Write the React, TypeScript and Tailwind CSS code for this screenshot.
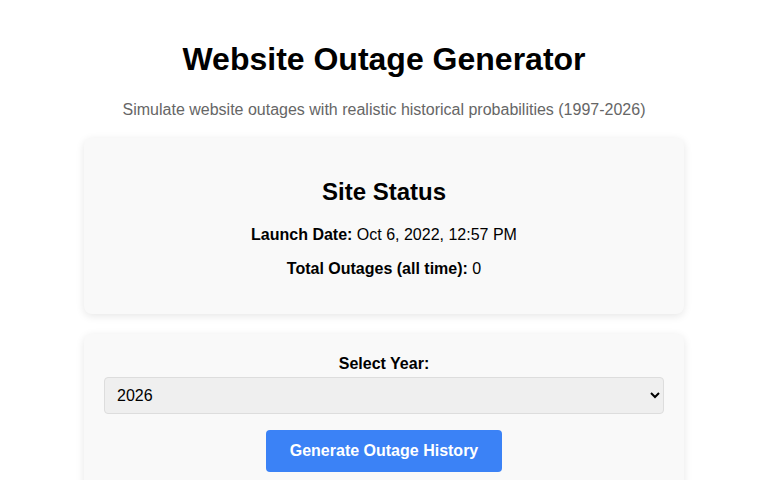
import { useState } from "react";

const App = () => {
  const [year, setYear] = useState("2026")
  const years = Array.from({ length: 30 }, (_, i) => String(2026 - i))

  return (
    <div className="min-h-screen bg-white p-5 font-['Liberation_Sans',Arial,sans-serif] text-black">
      <div className="mx-auto max-w-[600px] text-center">
        <h1 className="mt-[21px] text-[32px] font-bold leading-[37px]">Website Outage Generator</h1>
        <p className="mt-[23px] text-base leading-[18px] text-[#666]">
          Simulate website outages with realistic historical probabilities (1997-2026)
        </p>

        {/* Status card */}
        <div className="mt-[19px] rounded-lg bg-[#f9f9f9] p-5 shadow-[0_2px_8px_rgba(0,0,0,0.1)]">
          <h2 className="mt-5 text-2xl font-bold leading-[28px]">Site Status</h2>
          <p className="mt-5 text-base leading-[18px]">
            <strong>Launch Date:</strong> Oct 6, 2022, 12:57 PM
          </p>
          <p className="mt-4 mb-4 text-base leading-[18px]">
            <strong>Total Outages (all time):</strong> 0
          </p>
        </div>

        {/* Generator card */}
        <div className="mt-5 rounded-lg bg-[#f9f9f9] p-5 shadow-[0_2px_8px_rgba(0,0,0,0.1)]">
          <label htmlFor="year" className="block pt-px text-base font-bold leading-[18px]">
            Select Year:
          </label>
          <select
            id="year"
            value={year}
            onChange={(e) => setYear(e.target.value)}
            className="mt-1 block h-[37px] w-full rounded border border-[#ddd] bg-[#efefef] px-2 text-base text-black"
          >
            {years.map((y) => (
              <option key={y} value={y}>{y}</option>
            ))}
          </select>
          <button className="mt-4 h-[42px] rounded bg-[#3b82f6] px-6 text-base font-bold text-white">
            Generate Outage History
          </button>
        </div>
      </div>
    </div>
  )
}

export default App
